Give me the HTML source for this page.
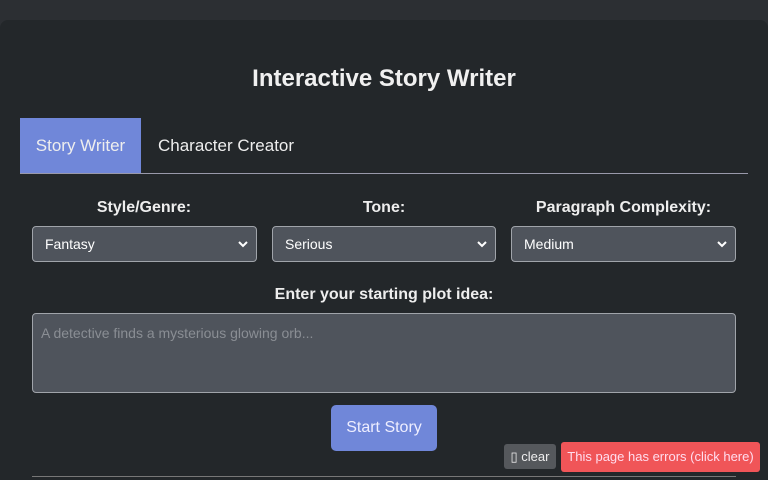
<!DOCTYPE html>
<html><head><style>
*{box-sizing:border-box;margin:0;padding:0}
html,body{width:768px;height:480px;overflow:hidden}
body{background:#2c2f33;font-family:"Liberation Sans",sans-serif;color:#fff;position:relative}
.card{position:absolute;left:0;top:20px;width:768px;height:460px;background:#23272a;border-radius:8px 8px 0 0}
.abs{position:absolute}
h1{position:absolute;left:0;width:768px;top:65px;text-align:center;font-size:24px;font-weight:bold;color:#f0f0f0}
.tab{position:absolute;top:118px;height:56px;line-height:56px;font-size:17px;color:#eee}
.line{position:absolute;left:20px;top:173px;width:728px;height:1px;background:#99a}
.lbl{position:absolute;font-size:16px;font-weight:bold;text-align:center;color:#eee}
.sel{position:absolute;top:226px;height:36px;background:#4f545c;border:1px solid #a0a4aa;border-radius:4px;font-size:14px;line-height:34px;padding-left:12px;color:#fff}
.sel svg{position:absolute;right:8px;top:13px}
</style></head><body>
<div class="card"></div>
<h1>Interactive Story Writer</h1>
<div class="tab" style="left:20px;width:121px;background:#7087d9;text-align:center">Story Writer</div>
<div class="tab" style="left:158px">Character Creator</div>
<div class="line"></div>
<div class="lbl" style="left:32px;width:224px;top:199px">Style/Genre:</div>
<div class="lbl" style="left:272px;width:224px;top:199px">Tone:</div>
<div class="lbl" style="left:511px;width:225px;top:199px">Paragraph Complexity:</div>
<div class="sel" style="left:32px;width:225px">Fantasy<svg width="10" height="8"><path d="M1 2l4 4 4-4" stroke="#fff" stroke-width="2" fill="none"/></svg></div>
<div class="sel" style="left:272px;width:224px">Serious<svg width="10" height="8"><path d="M1 2l4 4 4-4" stroke="#fff" stroke-width="2" fill="none"/></svg></div>
<div class="sel" style="left:511px;width:225px">Medium<svg width="10" height="8"><path d="M1 2l4 4 4-4" stroke="#fff" stroke-width="2" fill="none"/></svg></div>
<div class="lbl" style="left:0;width:768px;top:286px">Enter your starting plot idea:</div>
<div class="abs" style="left:32px;top:313px;width:704px;height:80px;background:#4f545c;border:1px solid #a0a4aa;border-radius:4px;padding:11px 8px;font-size:14px;color:#8a8e94">A detective finds a mysterious glowing orb...</div>
<div class="abs" style="left:331px;top:405px;width:106px;height:46px;background:#7087d9;border-radius:5px;text-align:center;line-height:46px;font-size:16px;color:#eef">Start Story</div>
<div class="abs" style="left:32px;top:476px;width:704px;height:1px;background:#777"></div>
<div class="abs" style="left:504px;top:444px;width:52px;height:25px;background:#55585c;border-radius:3px;font-size:13px;line-height:25px;text-align:center;color:#eee">▯ clear</div>
<div class="abs" style="left:561px;top:442px;width:199px;height:30px;background:#f05558;border-radius:3px;font-size:13px;line-height:30px;text-align:center;color:#fde">This page has errors (click here)</div>
</body></html>
